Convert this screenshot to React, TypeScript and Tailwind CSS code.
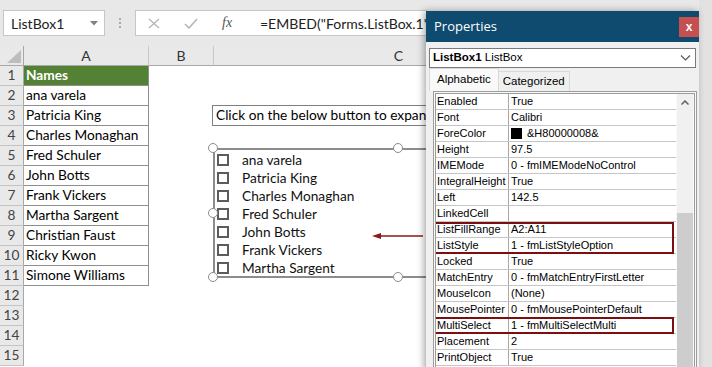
import React from "react";

const names = [
  "ana varela",
  "Patricia King",
  "Charles Monaghan",
  "Fred Schuler",
  "John Botts",
  "Frank Vickers",
  "Martha Sargent",
  "Christian Faust",
  "Ricky Kwon",
  "Simone Williams",
];

const props: [string, string][] = [
  ["Enabled", "True"],
  ["Font", "Calibri"],
  ["ForeColor", "&H80000008&"],
  ["Height", "97.5"],
  ["IMEMode", "0 - fmIMEModeNoControl"],
  ["IntegralHeight", "True"],
  ["Left", "142.5"],
  ["LinkedCell", ""],
  ["ListFillRange", "A2:A11"],
  ["ListStyle", "1 - fmListStyleOption"],
  ["Locked", "True"],
  ["MatchEntry", "0 - fmMatchEntryFirstLetter"],
  ["MouseIcon", "(None)"],
  ["MousePointer", "0 - fmMousePointerDefault"],
  ["MultiSelect", "1 - fmMultiSelectMulti"],
  ["Placement", "2"],
  ["PrintObject", "True"],
];

const cellFont = { fontFamily: "Lato, 'Liberation Sans', sans-serif" };
const uiFont = { fontFamily: "'Liberation Sans', Arial, sans-serif" };

function Handle({ x, y }: { x: number; y: number }) {
  return (
    <div
      className="absolute w-[10px] h-[10px] rounded-full bg-white border-[1.5px] border-[#8c8c8c]"
      style={{ left: x - 5, top: y - 5 }}
    />
  );
}

export default function App() {
  const rows = Array.from({ length: 15 }, (_, i) => i + 1);
  return (
    <div className="relative w-[712px] h-[367px] overflow-hidden bg-white" style={cellFont}>
      {/* Toolbar / formula bar */}
      <div className="h-[46px] bg-[#e8e8e8] flex items-start pt-[10px]">
        <div className="ml-[3px] w-[102px] h-[26px] bg-white border border-[#c6c6c6] flex items-center justify-between pl-[7px] pr-[6px]">
          <span className="text-[14px] text-[#222]">ListBox1</span>
          <svg width="8" height="5" viewBox="0 0 8 5">
            <path d="M0 0 L8 0 L4 4.5 Z" fill="#808080" />
          </svg>
        </div>
        <div className="w-[30px] h-[26px] flex flex-col items-center justify-center gap-[2px]">
          <div className="w-[2px] h-[2px] bg-[#a8a8a8]" />
          <div className="w-[2px] h-[2px] bg-[#a8a8a8]" />
          <div className="w-[2px] h-[2px] bg-[#a8a8a8]" />
        </div>
        <div className="w-[292px] h-[26px] bg-white border border-[#c6c6c6] border-r-0 flex items-center overflow-hidden">
          <div className="w-[124px] shrink-0 flex items-center">
            <svg className="ml-[12px]" width="12" height="11" viewBox="0 0 12 11">
              <path d="M1 1 L11 10 M11 1 L1 10" stroke="#b4b4b4" strokeWidth="1.3" />
            </svg>
            <svg className="ml-[24px]" width="14" height="11" viewBox="0 0 14 11">
              <path d="M1 6 L5 10 L13 1" stroke="#b4b4b4" strokeWidth="1.5" fill="none" />
            </svg>
            <span
              className="ml-[24px] text-[14px] italic text-[#555] leading-none"
              style={{ fontFamily: "'Liberation Serif', serif" }}
            >
              <i>f</i>x
            </span>
          </div>
          <span className="text-[14px] text-[#222] whitespace-nowrap">=EMBED("Forms.ListBox.1",""</span>
        </div>
      </div>

      {/* Column header row */}
      <div className="flex h-[20px] bg-[#e9e9e9] text-[14px] text-[#333]">
        <div className="relative w-[24px] shrink-0 border-r border-b border-[#a8a8a8]">
          <svg className="absolute left-[7px] top-[4px]" width="14" height="13" viewBox="0 0 14 13">
            <path d="M14 0 L14 13 L0 13 Z" fill="#bdbdbd" />
          </svg>
        </div>
        <div className="w-[125px] shrink-0 border-r border-[#c8c8c8] border-b border-b-[#a8a8a8] flex items-center justify-center">A</div>
        <div className="w-[65px] shrink-0 border-r border-[#c8c8c8] border-b border-b-[#a8a8a8] flex items-center justify-center">B</div>
        <div className="w-[370px] shrink-0 border-r border-[#c8c8c8] border-b border-b-[#a8a8a8] flex items-center justify-center">C</div>
        <div className="flex-1 border-b border-[#a8a8a8]" />
      </div>

      {/* Sheet rows */}
      {rows.map((r) => {
        const isHead = r === 1;
        const name = r >= 2 && r <= 11 ? names[r - 2] : "";
        const inData = r <= 11;
        return (
          <div key={r} className="flex h-[20px] text-[13.7px]">
            <div className="w-[24px] shrink-0 bg-[#e9e9e9] border-r border-[#a8a8a8] border-b border-b-[#c4c4c4] flex items-center justify-center text-[#444]">
              {r}
            </div>
            {inData ? (
              <div
                className={
                  "w-[125px] shrink-0 border-r border-b border-[#8e8e8e] flex items-center pl-[2px] whitespace-nowrap " +
                  (isHead ? "bg-[#548235] text-white font-bold" : "text-black")
                }
              >
                {isHead ? "Names" : name}
              </div>
            ) : (
              <div className="w-[125px] shrink-0" />
            )}
            <div className="flex-1" />
          </div>
        );
      })}

      {/* Text box object (continues under the Properties window) */}
      <div className="absolute left-[212px] top-[105px] w-[214px] h-[21px] border border-r-0 border-[#7f7f7f] bg-white flex items-center pl-[3px] text-[13.7px] text-black whitespace-nowrap overflow-hidden">
        Click on the below button to expand the list
      </div>

      {/* List box object */}
      <div className="absolute left-[213px] top-[148px] w-[372px] h-[130px] border-2 border-[#8c8c8c] bg-white">
        <div className="pt-[1px]">
          {names.slice(0, 7).map((n) => (
            <div key={n} className="h-[18px] flex items-center">
              <div className="ml-[2px] w-[12px] h-[12px] border-2 border-[#5c5c5c]" />
              <span className="ml-[13px] text-[13.7px] text-[#111] whitespace-nowrap">{n}</span>
            </div>
          ))}
        </div>
      </div>
      <Handle x={213} y={148} />
      <Handle x={398} y={148} />
      <Handle x={213} y={213} />
      <Handle x={213} y={277} />
      <Handle x={398} y={277} />

      {/* Arrow */}
      <svg className="absolute left-[370px] top-[231px]" width="54" height="10" viewBox="0 0 54 10">
        <path d="M10 5 L53 5" stroke="#8b1a1a" strokeWidth="1.3" />
        <path d="M2 5 L11 2 L11 8 Z" fill="#8b1a1a" />
      </svg>

      {/* Right gray strip */}
      <div className="absolute left-[699px] top-0 w-[13px] h-[367px] bg-[#e2e2e2]" />

      {/* Properties window */}
      <div
        className="absolute left-[426px] top-[11px] w-[273px] h-[360px] bg-[#f0f0f0] shadow-[-2px_0_7px_rgba(0,0,0,0.35)]"
        style={uiFont}
      >
        <div className="h-[31px] bg-[#0f4a6f] flex items-center justify-between pl-[8px]">
          <span className="text-white text-[13px]" style={{ fontFamily: "'Open Sans', sans-serif" }}>Properties</span>
          <div className="w-[20px] h-[20px] bg-[#c64f4f] flex items-center justify-center text-white text-[12px] font-bold mt-[1px]">
            x
          </div>
        </div>
        <div className="px-[3px] pt-[6px]">
          <div className="h-[20px] bg-white border border-[#7a7a7a] flex items-center justify-between pl-[3px] pr-[4px] text-[11.5px] text-black">
            <span>
              <b>ListBox1</b> ListBox
            </span>
            <svg width="11" height="6" viewBox="0 0 11 6">
              <path d="M1 0.5 L5.5 5 L10 0.5" stroke="#555" strokeWidth="1.1" fill="none" />
            </svg>
          </div>
        </div>
        {/* Tabs */}
        <div className="flex items-end h-[23px] pl-[3px] text-[11.5px] text-black">
          <div className="h-[23px] px-[7px] bg-[#f9f9f9] border border-b-0 border-[#d9d9d9] flex items-center">Alphabetic</div>
          <div className="h-[20px] px-[4px] bg-[#f0f0f0] border border-l-0 border-b-0 border-[#d9d9d9] flex items-center">Categorized</div>
        </div>
        {/* Grid */}
        <div className="relative ml-[7px] mr-[2px] h-[280px] bg-[#f9f9f9] border-[3px] border-double border-[#9c9c9c] border-b-0 overflow-hidden">
          <div className="flex">
            <div className="w-[240px] bg-white text-[11px] text-black">
              {props.map(([k, v]) => (
                <div key={k} className="h-[16px] flex border-b border-[#c6c6c6]">
                  <div className="w-[73px] shrink-0 border-r border-[#a8a8a8] pl-[1px] flex items-center whitespace-nowrap overflow-hidden">
                    {k}
                  </div>
                  <div className="flex-1 pl-[2px] flex items-center whitespace-nowrap overflow-hidden">
                    {k === "ForeColor" ? (
                      <>
                        <span className="w-[11px] h-[11px] bg-black inline-block mr-[5px]" />
                        {v}
                      </>
                    ) : (
                      v
                    )}
                  </div>
                </div>
              ))}
            </div>
            <div className="w-[16px] ml-[1px] h-[280px] bg-[#f0f0f0] flex flex-col">
              <div className="h-[17px] flex items-center justify-center">
                <svg width="8" height="5" viewBox="0 0 8 5">
                  <path d="M0.5 4.5 L4 1 L7.5 4.5" stroke="#606060" strokeWidth="1.5" fill="none" />
                </svg>
              </div>
              <div className="mt-[102px] flex-1 bg-[#cdcdcd]" />
            </div>
          </div>
          {/* Highlight boxes */}
          <div className="absolute left-[-2px] top-[128px] w-[240px] h-[32px] border-2 border-[#7b0f0f]" />
          <div className="absolute left-[-2px] top-[223px] w-[240px] h-[17px] border-2 border-[#7b0f0f]" />
        </div>
      </div>
    </div>
  );
}
